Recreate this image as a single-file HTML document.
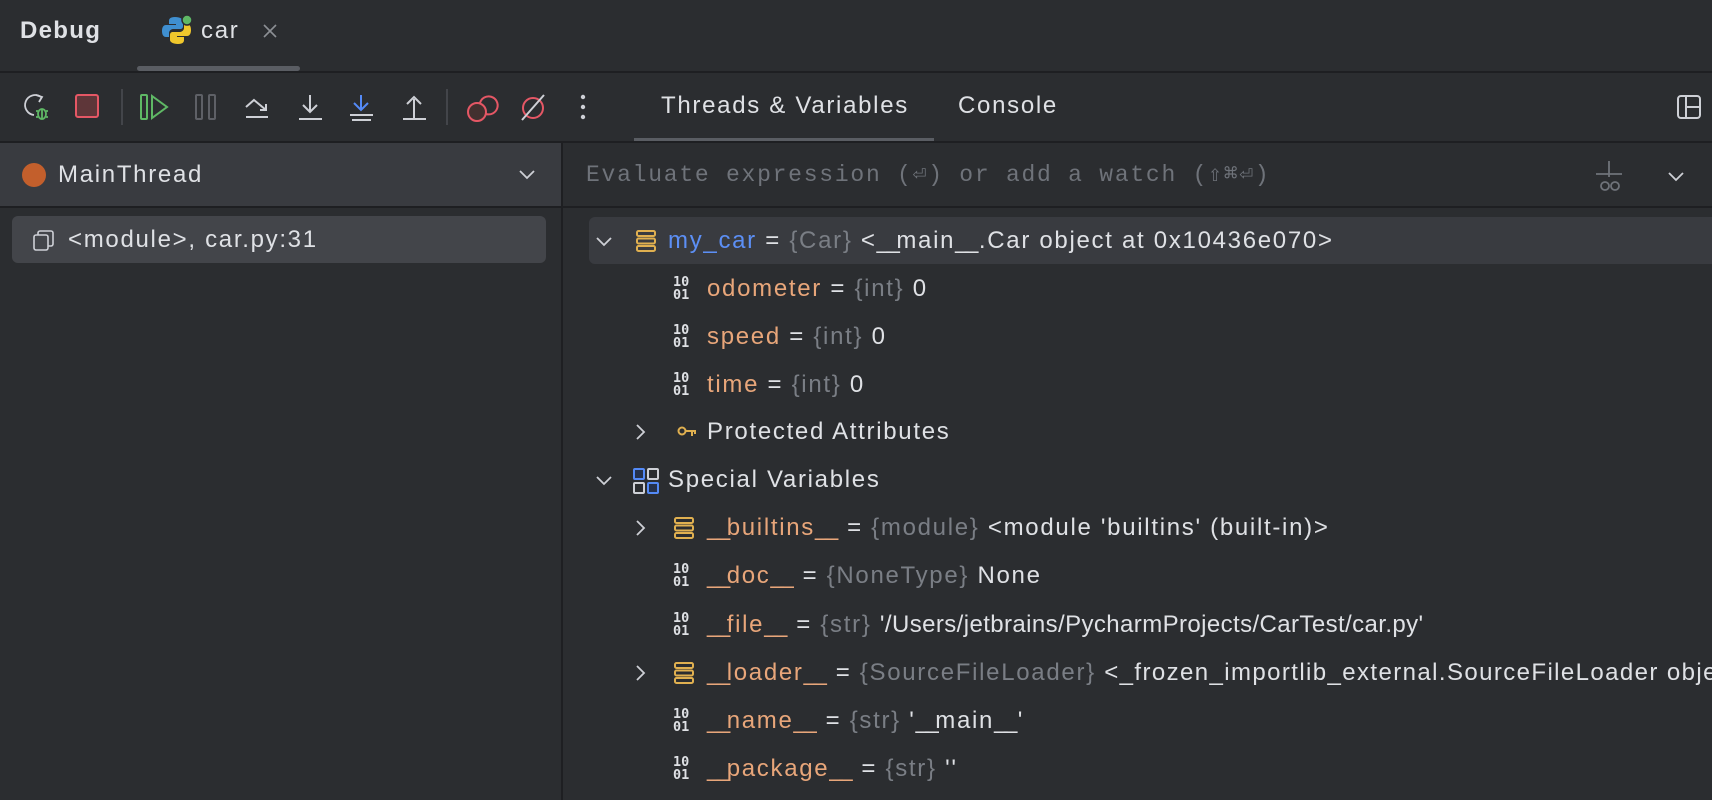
<!DOCTYPE html>
<html><head><meta charset="utf-8"><style>
*{margin:0;padding:0;box-sizing:border-box}
body{width:1712px;height:800px;background:#2b2d30;overflow:hidden;position:relative;font-family:"Liberation Sans","DejaVu Sans",sans-serif;color:#dfe1e5;letter-spacing:1.7px}
.a{position:absolute}
.hl{position:absolute;left:0;right:0;height:2px;background:#1e1f22}
.row{position:absolute;left:0;right:0;height:48px;line-height:48px;font-size:24px;white-space:nowrap;overflow:hidden}
.n{color:#e8a67a}.t{color:#7a7e85}.b{color:#5c8ff5}
.u{letter-spacing:-3.5px}
.u2{letter-spacing:-3.5px;margin-right:4px}
.bin{position:absolute;font-family:"DejaVu Sans Mono","Liberation Mono",monospace;font-weight:bold;font-size:13.5px;line-height:13px;color:#dfe1e5;top:11px;letter-spacing:0}
svg{position:absolute;overflow:visible}
</style></head><body>
<div class="a" style="left:20px;top:12px;font-size:24px;font-weight:bold;line-height:38px;letter-spacing:1.3px">Debug</div>
<svg style="left:162px;top:15px" width="30" height="31" viewBox="0 0 30 31">
<path d="M13 2c-5 0-6 2-6 4v3h7v1H4c-3 0-4 3-4 6s1 6 4 6h3v-4c0-2 2-4 4-4h7c2 0 3-1 3-3V6c0-2-3-4-8-4z" fill="#3f8fd0"/>
<path d="M16 29c5 0 6-2 6-4v-3h-7v-1h10c3 0 4-3 4-6s-1-6-4-6h-3v4c0 2-2 4-4 4h-7c-2 0-3 1-3 3v5c0 2 3 4 8 4z" fill="#f0c72c"/>
<circle cx="25" cy="5" r="5" fill="#5fb865" stroke="#2b2d30" stroke-width="1.5"/>
</svg>
<div class="a" style="left:201px;top:12px;font-size:24px;line-height:38px">car</div>
<svg style="left:263px;top:24px" width="14" height="14"><path d="M1 1L13 13M13 1L1 13" stroke="#8c8f94" stroke-width="1.6"/></svg>
<div class="a" style="left:137px;top:66px;width:163px;height:5px;border-radius:3px;background:#5a5d63"></div>
<div class="hl" style="top:71px"></div>
<svg style="left:24px;top:93px" width="28" height="28" viewBox="0 0 28 28" fill="none" stroke-width="1.8">
<path d="M17 4A10 10 0 1 0 10 22" stroke="#ced0d6"/><path d="M12 2l6 2-3 5" stroke="#ced0d6"/>
<ellipse cx="18" cy="21" rx="4" ry="5" stroke="#5fb865"/><path d="M12 18h2M22 18h2M12 24h2M22 24h2M18 16v10" stroke="#5fb865"/></svg>
<div class="a" style="left:75px;top:94px;width:24px;height:24px;border:2px solid #e55765;background:#5e3639;border-radius:3px"></div>
<div class="a" style="left:121px;top:89px;width:2px;height:36px;background:#43454a"></div>
<svg style="left:140px;top:94px" width="30" height="26" fill="none" stroke="#5fb865" stroke-width="2"><rect x="1" y="1" width="6" height="24" rx="1"/><path d="M12 2l15 11-15 11z"/></svg>
<svg style="left:195px;top:94px" width="22" height="26" fill="none" stroke="#5e6066" stroke-width="2"><rect x="1" y="1" width="6" height="24" rx="1"/><rect x="14" y="1" width="6" height="24" rx="1"/></svg>
<svg style="left:245px;top:95px" width="26" height="26" fill="none" stroke="#ced0d6" stroke-width="2"><path d="M1 12l8-7 12 10M21 9v6h-6M1 22h22"/></svg>
<svg style="left:298px;top:94px" width="26" height="28" fill="none" stroke="#ced0d6" stroke-width="2"><path d="M12 1v17M5 11l7 7 7-7M1 25h23"/></svg>
<svg style="left:349px;top:94px" width="26" height="28" fill="none" stroke="#548af7" stroke-width="2"><path d="M12 1v15M5 9l7 7 7-7"/><path d="M1 21h23M3 26h19" stroke="#ced0d6"/></svg>
<svg style="left:402px;top:94px" width="26" height="28" fill="none" stroke="#ced0d6" stroke-width="2"><path d="M12 25V5M5 10l7-7 7 7M1 25h23"/></svg>
<div class="a" style="left:446px;top:89px;width:2px;height:36px;background:#43454a"></div>
<svg style="left:466px;top:93px" width="30" height="30" fill="none" stroke="#e55765" stroke-width="2"><circle cx="11" cy="19" r="9" fill="#43302f"/><path d="M14 10A9 9 0 1 1 20 21"/></svg>
<svg style="left:520px;top:94px" width="26" height="28" fill="none" stroke-width="2"><circle cx="13" cy="14" r="10" stroke="#e55765"/><path d="M2 26L24 1" stroke="#ced0d6"/></svg>
<svg style="left:580px;top:94px" width="6" height="26" fill="#ced0d6"><circle cx="3" cy="3" r="2.2"/><circle cx="3" cy="13" r="2.2"/><circle cx="3" cy="23" r="2.2"/></svg>
<div class="a" style="left:661px;top:90px;font-size:24px;line-height:32px">Threads &amp; Variables</div>
<div class="a" style="left:958px;top:90px;font-size:24px;line-height:32px">Console</div>
<div class="a" style="left:634px;top:138px;width:300px;height:3px;background:#5a5d63"></div>
<svg style="left:1677px;top:95px" width="24" height="24" fill="none" stroke="#ced0d6" stroke-width="2"><rect x="1" y="1" width="22" height="22" rx="3"/><path d="M9 1v22M9 12h14"/></svg>
<div class="hl" style="top:141px"></div>
<div class="a" style="left:561px;top:143px;width:2px;height:657px;background:#1e1f22"></div>
<div class="a" style="left:0;top:143px;width:561px;height:63px;background:#393b40"></div>
<div class="a" style="left:22px;top:163px;width:24px;height:24px;border-radius:50%;background:#c35f2c"></div>
<div class="a" style="left:58px;top:159px;font-size:24px;line-height:32px">MainThread</div>
<svg style="left:519px;top:170px" width="16" height="10" fill="none" stroke="#ced0d6" stroke-width="1.8"><path d="M1 1l7 7 7-7"/></svg>
<div class="a" style="left:586px;top:159px;font-family:'Liberation Mono','DejaVu Sans Mono',monospace;font-size:23px;letter-spacing:1.75px;line-height:32px;color:#6f737a">Evaluate expression (⏎) or add a watch (⇧⌘⏎)</div>
<svg style="left:1595px;top:160px" width="30" height="32" fill="none" stroke="#6f737a" stroke-width="1.8"><path d="M14 1v16M1 14h26"/><circle cx="10" cy="26" r="4"/><circle cx="20" cy="26" r="4"/></svg>
<svg style="left:1668px;top:172px" width="16" height="10" fill="none" stroke="#ced0d6" stroke-width="1.8"><path d="M1 1l7 7 7-7"/></svg>
<div class="hl" style="top:206px"></div>
<div class="a" style="left:12px;top:216px;width:534px;height:47px;background:#43454a;border-radius:6px"></div>
<svg style="left:33px;top:230px" width="22" height="22" fill="none" stroke="#ced0d6" stroke-width="1.6"><rect x="1" y="5" width="14" height="15" rx="2"/><path d="M5 5V3a2 2 0 0 1 2-2h11a2 2 0 0 1 2 2v11a2 2 0 0 1-2 2h-3"/></svg>
<div class="a" style="left:68px;top:224px;font-size:24px;line-height:32px">&lt;module&gt;, car.py:31</div>
<div class="a" style="left:589px;top:217px;width:1123px;height:47px;background:#393b40;border-radius:6px 0 0 6px"></div>

<div class="row" style="top:217px">
<svg style="left:596px;top:20px" width="16" height="10" fill="none" stroke="#ced0d6" stroke-width="1.8"><path d="M1 1l7 7 7-7"/></svg>
<svg style="left:636px;top:13px" width="20" height="22" fill="none" stroke="#e0b050" stroke-width="2"><rect x="1" y="1" width="18" height="5" rx="1.5"/><rect x="1" y="8.5" width="18" height="5" rx="1.5"/><rect x="1" y="16" width="18" height="5" rx="1.5"/></svg>
<span class="a" style="left:668px"><span class="b">my_car</span> = <span class="t">{Car}</span> &lt;<span class="u">__</span>main<span class="u2">__</span>.Car object at 0x10436e070&gt;</span></div>

<div class="row" style="top:265px"><span class="bin" style="left:673px">10<br>01</span><span class="a" style="left:707px"><span class="n">odometer</span> = <span class="t">{int}</span> 0</span></div>
<div class="row" style="top:313px"><span class="bin" style="left:673px">10<br>01</span><span class="a" style="left:707px"><span class="n">speed</span> = <span class="t">{int}</span> 0</span></div>
<div class="row" style="top:361px"><span class="bin" style="left:673px">10<br>01</span><span class="a" style="left:707px"><span class="n">time</span> = <span class="t">{int}</span> 0</span></div>
<div class="row" style="top:408px">
<svg style="left:636px;top:16px" width="10" height="16" fill="none" stroke="#ced0d6" stroke-width="1.8"><path d="M1 1l7 7-7 7"/></svg>
<svg style="left:677px;top:18px" width="20" height="12" fill="none" stroke="#e0b050" stroke-width="2"><circle cx="5" cy="5" r="3.5"/><path d="M9 5h10M15 5v5M18 5v3"/></svg>
<span class="a" style="left:707px">Protected Attributes</span></div>
<div class="row" style="top:456px">
<svg style="left:596px;top:20px" width="16" height="10" fill="none" stroke="#ced0d6" stroke-width="1.8"><path d="M1 1l7 7 7-7"/></svg>
<svg style="left:633px;top:12px" width="26" height="26" fill="none" stroke-width="2"><rect x="1" y="1" width="10" height="10" rx="1" stroke="#548af7" fill="#25324d"/><rect x="15" y="1" width="10" height="10" rx="1" stroke="#ced0d6"/><rect x="1" y="15" width="10" height="10" rx="1" stroke="#ced0d6"/><rect x="15" y="15" width="10" height="10" rx="1" stroke="#548af7" fill="#25324d"/></svg>
<span class="a" style="left:668px">Special Variables</span></div>

<div class="row" style="top:504px">
<svg style="left:636px;top:16px" width="10" height="16" fill="none" stroke="#ced0d6" stroke-width="1.8"><path d="M1 1l7 7-7 7"/></svg>
<svg style="left:674px;top:13px" width="20" height="22" fill="none" stroke="#e0b050" stroke-width="2"><rect x="1" y="1" width="18" height="5" rx="1.5"/><rect x="1" y="8.5" width="18" height="5" rx="1.5"/><rect x="1" y="16" width="18" height="5" rx="1.5"/></svg>
<span class="a" style="left:707px"><span class="n"><span class="u">__</span>builtins<span class="u2">__</span></span> = <span class="t">{module}</span> &lt;module 'builtins' (built-in)&gt;</span></div>
<div class="row" style="top:552px"><span class="bin" style="left:673px">10<br>01</span><span class="a" style="left:707px"><span class="n"><span class="u">__</span>doc<span class="u2">__</span></span> = <span class="t">{NoneType}</span> None</span></div>
<div class="row" style="top:601px"><span class="bin" style="left:673px">10<br>01</span><span class="a" style="left:707px"><span class="n"><span class="u">__</span>file<span class="u2">__</span></span> = <span class="t">{str}</span> <span style="letter-spacing:0.4px">'/Users/jetbrains/PycharmProjects/CarTest/car.py'</span></span></div>
<div class="row" style="top:649px">
<svg style="left:636px;top:16px" width="10" height="16" fill="none" stroke="#ced0d6" stroke-width="1.8"><path d="M1 1l7 7-7 7"/></svg>
<svg style="left:674px;top:13px" width="20" height="22" fill="none" stroke="#e0b050" stroke-width="2"><rect x="1" y="1" width="18" height="5" rx="1.5"/><rect x="1" y="8.5" width="18" height="5" rx="1.5"/><rect x="1" y="16" width="18" height="5" rx="1.5"/></svg>
<span class="a" style="left:707px"><span class="n"><span class="u">__</span>loader<span class="u2">__</span></span> = <span class="t">{SourceFileLoader}</span> <span style="letter-spacing:1.4px">&lt;_frozen_importlib_external.SourceFileLoader object at 0x1043&gt;</span></span></div>
<div class="row" style="top:697px"><span class="bin" style="left:673px">10<br>01</span><span class="a" style="left:707px"><span class="n"><span class="u">__</span>name<span class="u2">__</span></span> = <span class="t">{str}</span> '<span class="u">__</span>main<span class="u2">__</span>'</span></div>
<div class="row" style="top:745px"><span class="bin" style="left:673px">10<br>01</span><span class="a" style="left:707px"><span class="n"><span class="u">__</span>package<span class="u2">__</span></span> = <span class="t">{str}</span> ''</span></div>
</body></html>
